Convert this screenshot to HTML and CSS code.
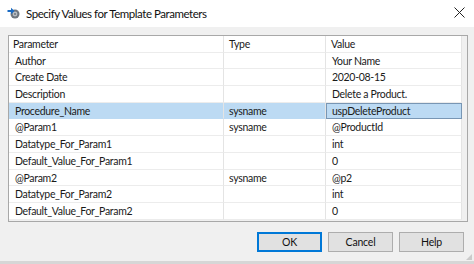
FILE: index.html
```html
<!DOCTYPE html>
<html>
<head>
<meta charset="utf-8">
<link rel="stylesheet" href="styles.css">
</head>
<body>
<div class="window">
  <div class="titlebar">
    <svg class="appicon" width="13" height="12" viewBox="0 0 13 12">
      <circle cx="8" cy="7" r="4.5" fill="#6f767e"/>
      <circle cx="8" cy="7" r="2.4" fill="#b9bec4"/>
      <circle cx="8" cy="7" r="1" fill="#6f767e"/>
      <path d="M0.5 3 H4 V0.8 L7.5 4 L4 7.2 V5 H0.5 Z" fill="#1b6cc4"/>
    </svg>
    <span class="title">Specify Values for Template Parameters</span>
    <svg class="close" width="11" height="11" viewBox="0 0 11 11">
      <path d="M0.5 0.5 L10.5 10.5 M10.5 0.5 L0.5 10.5" stroke="#222" stroke-width="1"/>
    </svg>
  </div>
  <div class="content">
    <div class="grid">
      <div class="table">
        <div class="row head"><div class="c1">Parameter</div><div class="c2">Type</div><div class="c3">Value</div></div>
        <div class="row"><div class="c1">Author</div><div class="c2"></div><div class="c3">Your Name</div></div>
        <div class="row"><div class="c1">Create Date</div><div class="c2"></div><div class="c3">2020-08-15</div></div>
        <div class="row"><div class="c1">Description</div><div class="c2"></div><div class="c3">Delete a Product.</div></div>
        <div class="row sel"><div class="c1">Procedure_Name</div><div class="c2">sysname</div><div class="c3 focus">uspDeleteProduct</div></div>
        <div class="row"><div class="c1">@Param1</div><div class="c2">sysname</div><div class="c3">@ProductId</div></div>
        <div class="row"><div class="c1">Datatype_For_Param1</div><div class="c2"></div><div class="c3">int</div></div>
        <div class="row"><div class="c1">Default_Value_For_Param1</div><div class="c2"></div><div class="c3">0</div></div>
        <div class="row"><div class="c1">@Param2</div><div class="c2">sysname</div><div class="c3">@p2</div></div>
        <div class="row"><div class="c1">Datatype_For_Param2</div><div class="c2"></div><div class="c3">int</div></div>
        <div class="row last"><div class="c1">Default_Value_For_Param2</div><div class="c2"></div><div class="c3">0</div></div>
      </div>
    </div>
    <div class="buttons">
      <button class="btn default">OK</button>
      <button class="btn">Cancel</button>
      <button class="btn">Help</button>
    </div>
  </div>
  <div class="grip"></div>
</div>
</body>
</html>
```
FILE: styles.css
```css
html, body {
  margin: 0;
  padding: 0;
  width: 474px;
  height: 264px;
  overflow: hidden;
  font-family: Lato, "Liberation Sans", Arial, sans-serif;
  color: #1a1a1a;
}
.window {
  position: relative;
  width: 474px;
  height: 264px;
  box-sizing: border-box;
  background: #f0f0f0;
  border-bottom: 3px solid #d6d6d6;
  display: flex;
  flex-direction: column;
}
.titlebar {
  height: 27px;
  background: #ffffff;
  display: flex;
  align-items: center;
  padding-left: 7px;
  padding-right: 9px;
}
.appicon { margin-right: 6px; margin-top: -2px; }
.title {
  font-size: 11.5px;
  letter-spacing: -0.45px;
  color: #111;
  flex: 1;
  margin-top: -1px;
}
.close { margin-top: -2px; }
.content {
  padding: 8px 6px 0 8px;
  display: flex;
  flex-direction: column;
}
.grid {
  height: 187px;
  box-sizing: border-box;
  border: 1px solid #a8a8a8;
  background: #f0f0f0;
}
.table {
  width: 453px;
  background: #fff;
}
.row {
  display: flex;
  height: 16.7px;
  font-size: 10.5px;
  letter-spacing: -0.3px;
  line-height: 16px;
}
.row > div {
  box-sizing: border-box;
  border-bottom: 1px solid #ececec;
  border-right: 1px solid #e4e4e4;
  white-space: nowrap;
  overflow: hidden;
}
.c1 { width: 215px; padding-left: 6px; }
.c2 { width: 102px; padding-left: 5px; }
.c3 { width: 136px; padding-left: 6px; }
.head .c1 { padding-left: 4px; }
.head .c2 { padding-left: 5px; }
.head .c3 { padding-left: 5px; }
.sel > div { background: #bcdaf3; border-bottom-color: #bcdaf3; }
.sel .c3.focus {
  border: 1px solid #7896b4;
  background: #bcdaf3;
  padding-left: 5px;
  line-height: 14px;
}
.buttons {
  display: flex;
  justify-content: flex-end;
  gap: 6px;
  margin-top: 10px;
  padding-right: 4px;
}
.btn {
  width: 65px;
  height: 20px;
  box-sizing: border-box;
  background: #e1e1e1;
  border: 1px solid #adadad;
  font-family: Lato, "Liberation Sans", Arial, sans-serif;
  font-size: 10.5px;
  letter-spacing: -0.2px;
  color: #111;
  padding: 0;
}
.btn.default {
  border: 2px solid #0078d7;
}
.grip {
  position: absolute;
  right: 2px;
  bottom: 1px;
  width: 6px;
  height: 6px;
  background: radial-gradient(circle, #b5b5b5 0.6px, transparent 0.9px) 0 0 / 2px 2px;
  clip-path: polygon(100% 0, 100% 100%, 0 100%);
}
```
